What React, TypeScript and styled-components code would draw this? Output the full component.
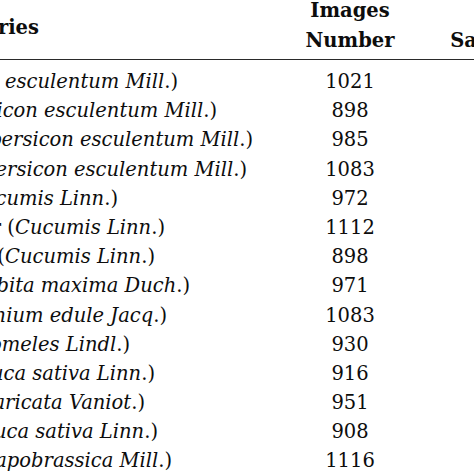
import styled, { createGlobalStyle } from 'styled-components'

const GlobalStyle = createGlobalStyle`
  html, body {
    margin: 0;
    padding: 0;
    background: #ffffff;
    overflow: hidden;
  }
  body {
    font-family: 'DejaVu Serif', 'Liberation Serif', serif;
    color: #0d0d0d;
  }
`

const Table = styled.div`
  width: 688px;
  font-size: 19.5px;
`

const HeaderRow = styled.div`
  display: flex;
  align-items: flex-end;
  height: 60px;
  box-sizing: border-box;
  padding-bottom: 3.8px;
  border-bottom: 1.5px solid #2a2a2a;
`

const HeadCell = styled.div<{ $width?: number }>`
  display: flex;
  flex-direction: column;
  align-items: center;
  ${(p) => (p.$width ? `width: ${p.$width}px;` : 'flex: 1;')}
  flex-shrink: 0;
  line-height: 29.5px;
  font-weight: 700;
  white-space: nowrap;
`

const HeadNameCell = styled(HeadCell)`
  align-items: flex-end;
  padding-right: 261px;
  box-sizing: border-box;
  margin-bottom: 13px;
`

const Body = styled.div`
  padding-top: 7px;
`

const Row = styled.div`
  display: grid;
  grid-template-columns: 300px 100px 1fr;
  line-height: 29.2px;
  height: 29.2px;
`

/* the table is cropped on the left, so each name is pinned to its right end */
const NameCell = styled.div<{ $end: number }>`
  display: flex;
  justify-content: flex-end;
  padding-right: ${(p) => 300 - p.$end}px;
  white-space: nowrap;
`

const Latin = styled.i`
  font-style: italic;
`

const NumCell = styled.div`
  text-align: center;
`

type Variety = {
  common: string
  latin: string
  images: number
  end: number
}

const varieties: Variety[] = [
  { common: 'Tomato', latin: 'Lycopersicon esculentum Mill', images: 1021, end: 178 },
  { common: 'Cherry tomato', latin: 'Lycopersicon esculentum Mill', images: 898, end: 217 },
  { common: 'Green tomato', latin: 'Lycopersicon esculentum Mill', images: 985, end: 253 },
  { common: 'Large tomato', latin: 'Lycopersicon esculentum Mill', images: 1083, end: 247 },
  { common: 'Melon', latin: 'Cucumis Linn', images: 972, end: 118 },
  { common: 'Cucumber', latin: 'Cucumis Linn', images: 1112, end: 165 },
  { common: 'Muskmelon', latin: 'Cucumis Linn', images: 898, end: 155 },
  { common: 'Pumpkin', latin: 'Cucurbita maxima Duch', images: 971, end: 190 },
  { common: 'Chayote', latin: 'Sechium edule Jacq', images: 1083, end: 167 },
  { common: 'Papaya', latin: 'Chaenomeles Lindl', images: 930, end: 130 },
  { common: 'Lettuce', latin: 'Lactuca sativa Linn', images: 916, end: 155 },
  { common: 'Youmai', latin: 'Lactuca divaricata Vaniot', images: 951, end: 145 },
  { common: 'Romaine', latin: 'Lactuca sativa Linn', images: 908, end: 158 },
  { common: 'Rutabaga', latin: 'Brassica napobrassica Mill', images: 1116, end: 172 },
]

export default function App() {
  return (
    <>
      <GlobalStyle />
      <Table>
        <HeaderRow>
          <HeadNameCell $width={300}>
            <span>Categories</span>
          </HeadNameCell>
          <HeadCell $width={100}>
            <span>Images</span>
            <span>Number</span>
          </HeadCell>
          <HeadCell>
            <span>Training</span>
            <span>Samples Number</span>
          </HeadCell>
        </HeaderRow>
        <Body>
          {varieties.map((v) => (
            <Row key={v.common}>
              <NameCell $end={v.end}>
                {v.common} (<Latin>{v.latin}</Latin>.)
              </NameCell>
              <NumCell>{v.images}</NumCell>
              <NumCell />
            </Row>
          ))}
        </Body>
      </Table>
    </>
  )
}
